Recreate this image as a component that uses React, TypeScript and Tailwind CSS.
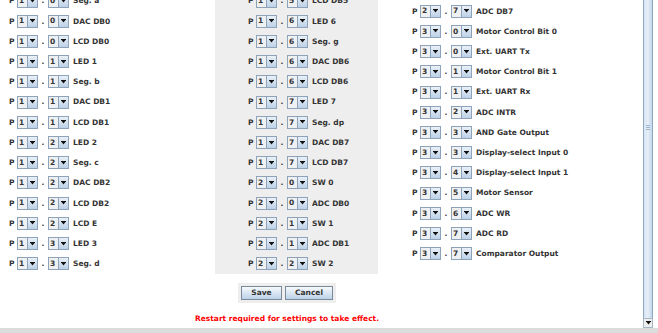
import React from "react";

type Pin = [number, number, string];

const left: Pin[] = [
  [1, 0, "Seg. a"],
  [1, 0, "DAC DB0"],
  [1, 0, "LCD DB0"],
  [1, 1, "LED 1"],
  [1, 1, "Seg. b"],
  [1, 1, "DAC DB1"],
  [1, 1, "LCD DB1"],
  [1, 2, "LED 2"],
  [1, 2, "Seg. c"],
  [1, 2, "DAC DB2"],
  [1, 2, "LCD DB2"],
  [1, 2, "LCD E"],
  [1, 3, "LED 3"],
  [1, 3, "Seg. d"],
];

const middle: Pin[] = [
  [1, 5, "LCD DB5"],
  [1, 6, "LED 6"],
  [1, 6, "Seg. g"],
  [1, 6, "DAC DB6"],
  [1, 6, "LCD DB6"],
  [1, 7, "LED 7"],
  [1, 7, "Seg. dp"],
  [1, 7, "DAC DB7"],
  [1, 7, "LCD DB7"],
  [2, 0, "SW 0"],
  [2, 0, "ADC DB0"],
  [2, 1, "SW 1"],
  [2, 1, "ADC DB1"],
  [2, 2, "SW 2"],
];

const right: Pin[] = [
  [2, 7, "ADC DB7"],
  [3, 0, "Motor Control Bit 0"],
  [3, 0, "Ext. UART Tx"],
  [3, 1, "Motor Control Bit 1"],
  [3, 1, "Ext. UART Rx"],
  [3, 2, "ADC INTR"],
  [3, 3, "AND Gate Output"],
  [3, 3, "Display-select Input 0"],
  [3, 4, "Display-select Input 1"],
  [3, 5, "Motor Sensor"],
  [3, 6, "ADC WR"],
  [3, 7, "ADC RD"],
  [3, 7, "Comparator Output"],
];

const Arrow = () => (
  <svg width="5" height="4" viewBox="0 0 5 4">
    <rect x="0" y="0" width="5" height="1" fill="#111" />
    <polygon points="0.5,1 4.5,1 2.5,3.5" fill="#111" />
  </svg>
);

const Combo = ({ value }: { value: number }) => (
  <div className="flex h-[13px] w-[21px] border border-[#8ea3b9] bg-[#eef0f2]">
    <span className="flex flex-1 items-center pl-[1px] leading-none">{value}</span>
    <span className="flex w-[10px] items-center justify-center border-l border-[#8ea3b9] bg-gradient-to-b from-[#eaf1f8] to-[#bcd1e7]">
      <Arrow />
    </span>
  </div>
);

const Row = ({ pin }: { pin: Pin }) => (
  <div className="flex h-[20.23px] items-center">
    <span className="w-[5px]">P</span>
    <span className="ml-[3px]">
      <Combo value={pin[0]} />
    </span>
    <span className="w-[10px] text-center">.</span>
    <Combo value={pin[1]} />
    <span className="ml-[4px] whitespace-nowrap">{pin[2]}</span>
  </div>
);

export default function App() {
  return (
    <div className="flex h-[333px] w-[658px] flex-col overflow-hidden bg-white font-['DejaVu_Sans',sans-serif] text-[7.5px] font-bold text-[#333]">
      <div className="flex h-[328px] overflow-hidden">
        <div className="flex-1 overflow-hidden">
          <div className="-mt-[9.1px] flex w-[574px] flex-col">
            <div className="flex items-center">
              <div className="flex w-[215px] flex-col pl-[9px]">
                {left.map((p, i) => (
                  <Row key={i} pin={p} />
                ))}
              </div>
              <div className="flex w-[163px] flex-col self-stretch bg-[#eeeeee] pl-[33px]">
                {middle.map((p, i) => (
                  <Row key={i} pin={p} />
                ))}
              </div>
              <div className="flex flex-1 flex-col pl-[34px]">
                {right.map((p, i) => (
                  <Row key={i} pin={p} />
                ))}
              </div>
            </div>
            <div className="mt-[9px] flex justify-center">
              <div className="flex gap-[3px] bg-[#eeeeee] px-[3px] py-[3px]">
                <button className="h-[14px] w-[41px] border border-[#7a8a99] bg-gradient-to-b from-[#f6f9fc] to-[#bdd2e8] text-[7.5px] font-bold text-[#333]">
                  Save
                </button>
                <button className="h-[14px] w-[48px] border border-[#7a8a99] bg-gradient-to-b from-[#f6f9fc] to-[#bdd2e8] text-[7.5px] font-bold text-[#333]">
                  Cancel
                </button>
              </div>
            </div>
            <div className="mt-[10px] text-center text-[#ff0000]">
              Restart required for settings to take effect.
            </div>
          </div>
        </div>
        <div className="flex w-[10px] flex-col">
          <div className="flex flex-1 items-center justify-center border-x border-[#8ea8c3] bg-gradient-to-r from-[#d9e6f3] via-[#e6eef7] to-[#c3d6ea]">
            <div className="-mt-[64px] flex flex-col gap-[1px]">
              <div className="h-[1px] w-[4px] bg-[#9fb5cc]" />
              <div className="h-[1px] w-[4px] bg-[#9fb5cc]" />
              <div className="h-[1px] w-[4px] bg-[#9fb5cc]" />
            </div>
          </div>
          <div className="flex h-[10px] items-center justify-center border border-[#a9b6c3] bg-[#eeeeee]">
            <Arrow />
          </div>
        </div>
        <div className="w-[5px]" />
      </div>
      <div className="flex-1 bg-[#dcdcdc]" />
    </div>
  );
}
